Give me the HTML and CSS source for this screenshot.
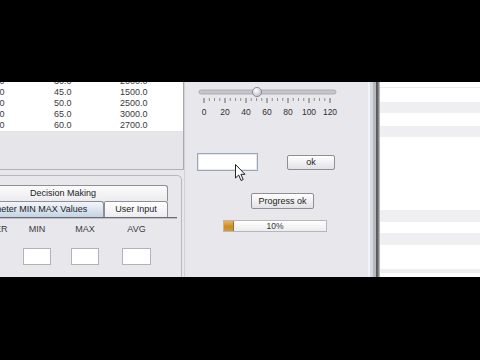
FILE: index.html
```html
<!DOCTYPE html>
<html>
<head>
<meta charset="utf-8">
<link rel="stylesheet" href="styles.css">
</head>
<body>
<div class="screen">
  <div class="bar"></div>
  <div class="app">
    <div class="left">
      <div class="scroll">
        <div class="table">
          <div class="rows">
            <div class="row"><span>40.0</span><span>30.0</span><span>2000.0</span></div>
            <div class="row"><span>30.0</span><span>45.0</span><span>1500.0</span></div>
            <div class="row"><span>20.0</span><span>50.0</span><span>2500.0</span></div>
            <div class="row"><span>10.0</span><span>65.0</span><span>3000.0</span></div>
            <div class="row"><span>50.0</span><span>60.0</span><span>2700.0</span></div>
          </div>
        </div>
      </div>
      <div class="panel">
        <div class="tabs">
          <div class="tabrow">
            <div class="tab full">Decision Making</div>
          </div>
          <div class="tabrow">
            <div class="tab sel">Parameter MIN MAX Values</div>
            <div class="tab plain">User Input</div>
          </div>
        </div>
        <div class="tabline"></div>
        <div class="grid labels">
          <span class="cut">ER</span><span>MIN</span><span></span><span>MAX</span><span></span><span>AVG</span>
        </div>
        <div class="grid fields">
          <span></span><span class="field"></span><span></span><span class="field"></span><span></span><span class="field"></span>
        </div>
      </div>
    </div>
    <div class="mid">
      <svg class="slider" width="150" height="36" viewBox="0 0 150 36">
        <defs>
          <radialGradient id="thumb" cx="0.4" cy="0.35" r="0.7">
            <stop offset="0" stop-color="#ffffff"/>
            <stop offset="1" stop-color="#b8bcc4"/>
          </radialGradient>
        </defs>
        <rect x="6" y="6" width="137" height="4" rx="2" fill="#c6c6ca" stroke="#a2a2a8" stroke-width="0.8"/>
        <path d="M16.25 14v3M21.5 14v3M26.75 14v3M37.25 14v3M42.5 14v3M47.75 14v3M58.25 14v3M63.5 14v3M68.75 14v3M79.25 14v3M84.5 14v3M89.75 14v3M100.25 14v3M105.5 14v3M110.75 14v3M121.25 14v3M126.5 14v3M131.75 14v3" stroke="#777" stroke-width="0.8"/>
        <path d="M11 14v5M32 14v5M53 14v5M74 14v5M95 14v5M116 14v5M137 14v5" stroke="#555" stroke-width="0.9"/>
        <circle cx="64" cy="8" r="4.6" fill="url(#thumb)" stroke="#85888e" stroke-width="0.9"/>
        <g class="ticklabels" text-anchor="middle">
          <text x="11" y="31">0</text>
          <text x="32" y="31">20</text>
          <text x="53" y="31">40</text>
          <text x="74" y="31">60</text>
          <text x="95" y="31">80</text>
          <text x="116" y="31">100</text>
          <text x="137" y="31">120</text>
        </g>
      </svg>
      <div class="inputrow">
        <div class="tf"></div>
        <div class="btn ok">ok</div>
      </div>
      <div class="btn prog">Progress ok</div>
      <div class="pbar">
        <div class="pfill"></div>
        <div class="ptext">10%</div>
      </div>
    </div>
    <div class="edge"></div>
    <div class="right">
      <div class="s w" style="height:5px"></div>
      <div class="s line" style="height:1px"></div>
      <div class="s w" style="height:14px"></div>
      <div class="s g" style="height:11px"></div>
      <div class="s w" style="height:13px"></div>
      <div class="s g" style="height:11px"></div>
      <div class="s w" style="height:73px"></div>
      <div class="s g" style="height:12px"></div>
      <div class="s w" style="height:11px"></div>
      <div class="s g" style="height:12px"></div>
      <div class="s w" style="height:24px"></div>
      <div class="s g" style="height:4px"></div>
      <div class="s w" style="height:4px"></div>
    </div>
  </div>
  <div class="bar bottom"></div>
  <svg class="cursor" width="12" height="18" viewBox="0 0 12 18">
    <path d="M0.5 0.5 L0.5 14 L3.7 11 L6 16.5 L8.2 15.6 L5.9 10.3 L10 10.3 Z" fill="#fff" stroke="#222" stroke-width="1" stroke-linejoin="round"/>
  </svg>
</div>
</body>
</html>
```

FILE: styles.css
```css
* { box-sizing: border-box; }
html, body { margin: 0; padding: 0; background: #000; }
body {
  font-family: "Liberation Sans", Arial, sans-serif;
  font-size: 9px;
  color: #2e2e32;
}
.screen {
  position: relative;
  width: 480px;
  height: 360px;
  display: flex;
  flex-direction: column;
  overflow: hidden;
}
.bar { height: 82px; background: #000; flex: none; }
.bar.bottom { flex: 1; }
.app {
  height: 195px;
  display: flex;
  background: #e8e8ec;
  flex: none;
}
.left {
  width: 184px;
  display: flex;
  flex-direction: column;
  flex: none;
}
.scroll {
  height: 88px;
  border-right: 1px solid #a8a8ae;
  border-bottom: 1px solid #b0b0b6;
  background: #e6e6ea;
}
.table {
  height: 49px;
  background: #fff;
  overflow: hidden;
}
.rows { margin-top: -6px; margin-left: -13px; }
.row {
  display: grid;
  grid-template-columns: 67px 66px 80px;
  height: 11px;
  line-height: 11px;
  color: #3a3a3e;
}
.panel {
  margin-top: 5px;
  width: 182px;
  flex: 1;
  border-top: 1px solid #b8b8bc;
  border-right: 1px solid #b8b8bc;
  border-top-right-radius: 5px;
  overflow: hidden;
}
.tabs {
  margin-top: 9px;
  margin-left: -41px;
  width: 209px;
}
.tabrow { display: flex; height: 16px; }
.tab {
  border-top: 1px solid #8e8e94;
  border-right: 1px solid #8e8e94;
  border-top-right-radius: 3px;
  text-align: center;
  line-height: 15px;
  color: #222;
}
.tab.full {
  width: 209px;
  background: linear-gradient(#fbfbfc, #ececf0);
}
.tab.sel {
  width: 145px;
  background: linear-gradient(#f2f6fa, #c4d4e4);
}
.tab.plain {
  width: 64px;
  background: linear-gradient(#ffffff, #ededf0);
  border-left: 1px solid #8e8e94;
  border-top-left-radius: 2px;
}
.tabline {
  width: 177px;
  height: 2px;
  border-top: 1px solid #6c6c72;
  border-bottom: 1px solid #c0c0c6;
}
.grid {
  display: grid;
  grid-template-columns: 23px 28px 20px 28px 23px 29px;
}
.labels {
  margin-top: 5px;
  height: 11px;
  line-height: 11px;
  text-align: center;
  color: #3a3a3e;
}
.labels .cut { text-align: left; margin-left: -5px; }
.fields { margin-top: 13px; height: 17px; }
.field {
  background: #fff;
  border: 1px solid #b2b2b8;
}
.mid {
  width: 184px;
  flex: none;
  border-left: 1px solid #d2d2d6;
  padding-top: 2px;
}
.slider { display: block; margin-left: 8px; }
.ticklabels { font-size: 8.5px; fill: #2e2e32; font-family: "Liberation Sans", Arial, sans-serif; }
.inputrow {
  display: flex;
  align-items: flex-start;
  margin-top: 33px;
  margin-left: 12px;
  height: 18px;
}
.tf {
  width: 61px;
  height: 18px;
  background: #fff;
  border: 1px solid #9ca6b6;
  box-shadow: inset 0 0 0 1px #e2e7ee;
}
.btn {
  border: 1px solid #8e8e94;
  border-radius: 2px;
  background: linear-gradient(#ffffff, #e2e2e6);
  text-align: center;
  color: #222;
}
.ok {
  margin-left: 29px;
  margin-top: 2px;
  width: 48px;
  height: 15px;
  line-height: 13px;
}
.prog {
  margin-top: 22px;
  margin-left: 66px;
  width: 63px;
  height: 16px;
  line-height: 14px;
}
.pbar {
  margin-top: 11px;
  margin-left: 38px;
  width: 104px;
  height: 12px;
  border: 1px solid #b6b6bc;
  background: linear-gradient(#ffffff, #ececf0);
  display: grid;
}
.pfill, .ptext { grid-area: 1 / 1; }
.pfill {
  width: 10px;
  background: linear-gradient(#e9b458, #c98b22 60%, #d69a38);
  border-right: 1px solid #a8701a;
}
.ptext {
  text-align: center;
  line-height: 10px;
  font-size: 8.5px;
  color: #333;
}
.edge {
  width: 12px;
  flex: none;
  background: linear-gradient(to right,
    #f0f4f8 0, #f0f4f8 2px,
    #d6dbe2 2px, #d6dbe2 5px,
    #b6bac0 5px, #b6bac0 8px,
    #505052 8px, #6a6a6c 10px,
    #a0a0a2 11px, #d0d0d2 12px);
}
.right { flex: 1; display: flex; flex-direction: column; }
.s { flex: none; }
.s.w { background: #ffffff; }
.s.g { background: #efeff1; }
.s.line { background: #ececee; }
.cursor {
  position: absolute;
  left: 235px;
  top: 164px;
}
```
